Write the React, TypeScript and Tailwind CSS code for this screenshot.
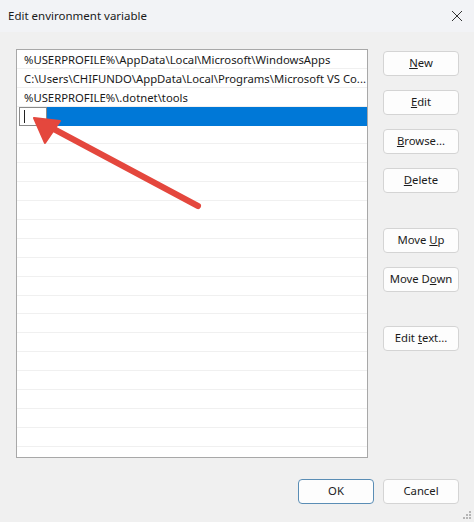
import React from "react";

const font = { fontFamily: '"Segoe UI", "Noto Sans", "Open Sans", sans-serif' };

function Btn({ children, top }: { children: React.ReactNode; top: string }) {
  return (
    <div
      className={`${top} w-[76px] h-[25px] flex items-center justify-center bg-[#fdfdfd] border border-[#d4d4d4] rounded-[4px] text-[11.3px] text-[#1b1b1b]`}
    >
      {children}
    </div>
  );
}

export default function App() {
  const rows = [
    "%USERPROFILE%\\AppData\\Local\\Microsoft\\WindowsApps",
    "C:\\Users\\CHIFUNDO\\AppData\\Local\\Programs\\Microsoft VS Co...",
    "%USERPROFILE%\\.dotnet\\tools",
  ];
  const empty = Array.from({ length: 18 });
  return (
    <div className="relative w-[474px] h-[522px] bg-[#f0f0f0] overflow-hidden flex flex-col" style={font}>
      <div className="h-[32px] bg-[#f2f3f6] flex items-center justify-between pl-[8px] pr-[10px] shrink-0">
        <span className="text-[11.5px] text-[#1a1a1a]">Edit environment variable</span>
        <svg width="12" height="12" viewBox="0 0 12 12" className="mr-[1px]">
          <path d="M1 1 L11 11 M11 1 L1 11" stroke="#333" strokeWidth="1" />
        </svg>
      </div>
      <div className="flex pl-[16px] pt-[17px]">
        <div className="w-[352px] h-[409px] bg-white border border-[#a8a8a8] overflow-hidden">
          {rows.map((r, i) => (
            <div
              key={i}
              className="h-[18.9px] border-b border-[#f0f0f0] pl-[7px] pt-[1px] text-[11.3px] leading-[18px] text-[#1a1a1a] whitespace-nowrap overflow-hidden"
            >
              {r}
            </div>
          ))}
          <div className="h-[18.9px] flex items-stretch">
            <div className="ml-[2px] w-[28px] bg-white border border-[#8a8a8a] flex items-center pl-[4px]">
              <div className="w-[1px] h-[13px] bg-[#222]" />
            </div>
            <div className="flex-1 bg-[#0078d7]" />
          </div>
          {empty.map((_, i) => (
            <div key={i} className="h-[18.9px] border-b border-[#f0f0f0]" />
          ))}
        </div>
        <div className="ml-[15px] flex flex-col pt-[2px]">
          <Btn top="">
            <span><u>N</u>ew</span>
          </Btn>
          <Btn top="mt-[14px]">
            <span><u>E</u>dit</span>
          </Btn>
          <Btn top="mt-[14px]">
            <span><u>B</u>rowse...</span>
          </Btn>
          <Btn top="mt-[14px]">
            <span><u>D</u>elete</span>
          </Btn>
          <Btn top="mt-[35px]">
            <span>Move <u>U</u>p</span>
          </Btn>
          <Btn top="mt-[14px]">
            <span>Move D<u>o</u>wn</span>
          </Btn>
          <Btn top="mt-[34px]">
            <span>Edit <u>t</u>ext...</span>
          </Btn>
        </div>
      </div>
      <div className="flex justify-end gap-[9px] pr-[15px] mt-[21px]">
        <div className="w-[76px] h-[25px] flex items-center justify-center bg-[#fdfdfd] border border-[#5a8db5] rounded-[4px] text-[11.3px] text-[#1b1b1b]">
          OK
        </div>
        <div className="w-[76px] h-[25px] flex items-center justify-center bg-[#fdfdfd] border border-[#d4d4d4] rounded-[4px] text-[11.3px] text-[#1b1b1b]">
          Cancel
        </div>
      </div>
      <svg className="absolute right-[2px] bottom-[2px]" width="10" height="10" viewBox="0 0 10 10">
        <rect x="7" y="1" width="2" height="2" fill="#b5b5b5" />
        <rect x="4" y="4" width="2" height="2" fill="#b5b5b5" />
        <rect x="7" y="4" width="2" height="2" fill="#b5b5b5" />
        <rect x="1" y="7" width="2" height="2" fill="#b5b5b5" />
        <rect x="4" y="7" width="2" height="2" fill="#b5b5b5" />
        <rect x="7" y="7" width="2" height="2" fill="#b5b5b5" />
      </svg>
      <svg className="absolute left-0 top-0 pointer-events-none" width="474" height="522" viewBox="0 0 474 522">
        <line x1="198" y1="206" x2="50" y2="127" stroke="#e4473d" strokeWidth="6" strokeLinecap="round" />
        <polygon points="34,118 60,121 45,143" fill="#e4473d" stroke="#e4473d" strokeWidth="2" strokeLinejoin="round" />
      </svg>
    </div>
  );
}
